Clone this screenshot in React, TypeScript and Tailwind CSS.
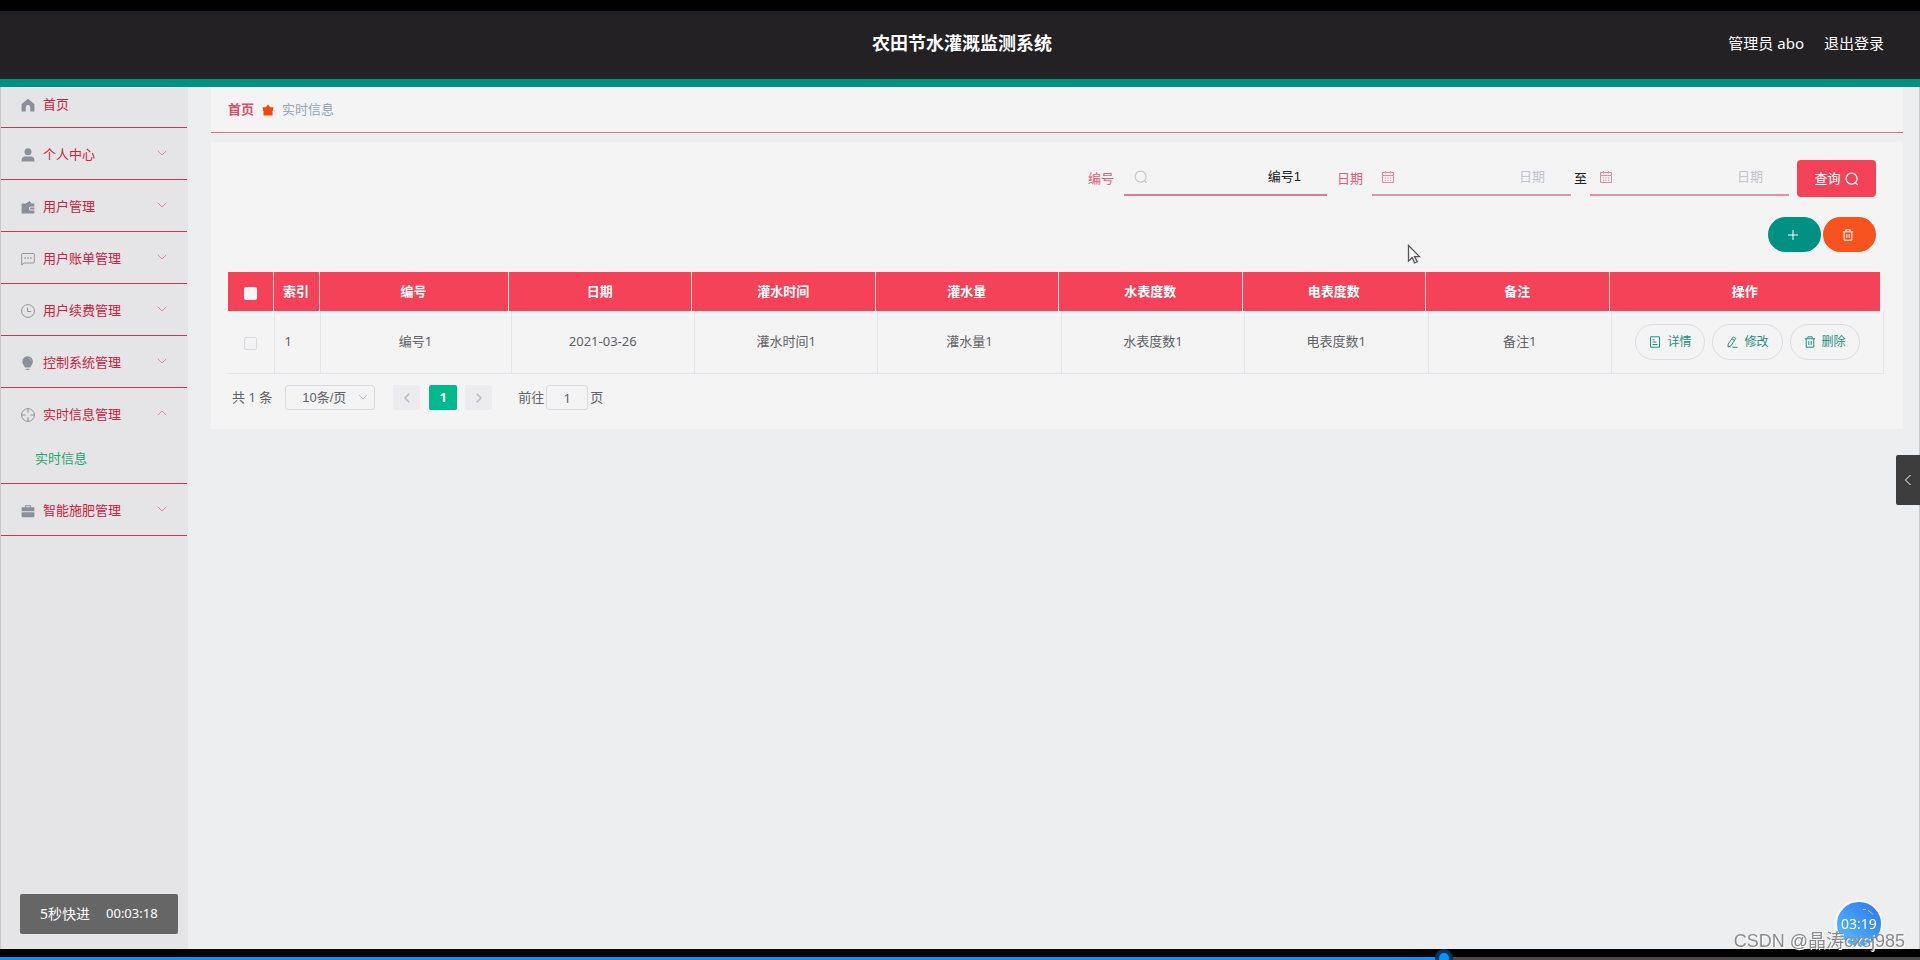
import { useState } from "react";
import type { ReactNode } from "react";

interface MenuItem {
  name: string;
  icon: ReactNode;
  children?: string[];
}

interface RecordRow {
  id: number;
  code: string;
  date: string;
  time: string;
  amount: string;
  water: string;
  electric: string;
  remark: string;
}

const ICON = "w-[14px] h-[14px] shrink-0";

const HomeIcon = () => (
  <svg viewBox="0 0 14 14" className={ICON} fill="#8d8f98">
    <path d="M7 .8 13.4 6v7.4H9.2V9.2a2.2 2.2 0 0 0-4.4 0v4.2H.6V6z" />
  </svg>
);

const UserIcon = () => (
  <svg viewBox="0 0 14 14" className={ICON} fill="#8d8f98">
    <circle cx="7" cy="3.8" r="3.5" />
    <path d="M.6 13.4v-1.6c0-1.900 1.500-3.200 3.200-3.200h6.400c1.700 0 3.200 1.300 3.200 3.200v1.600z" />
  </svg>
);

const WalletIcon = () => (
  <svg viewBox="0 0 14 14" className={ICON} fill="#8d8f98">
    <path d="M.6 3.600 5 3.600 8.600 1l2 2.600h2.800v3H9.800a1.900 1.900 0 0 0 0 3.900h3.600v2.900H.6z" />
    <path d="M10 7.600h3.400v1.900H10a.9.9 0 0 1 0-1.900z" />
  </svg>
);

const ChatIcon = () => (
  <svg viewBox="0 0 14 14" className={ICON} fill="none" stroke="#94969e">
    <path d="M1.500 1.500h11a.8.8 0 0 1 .8.8v7.900a.8.8 0 0 1-.8.8H3.200L.7 13V2.300a.8.8 0 0 1 .8-.8z" />
    <path d="M3.500 6h1.500M6.300 6h1.500M9.100 6h1.500" strokeWidth="1.400" />
  </svg>
);

const ClockIcon = () => (
  <svg viewBox="0 0 14 14" className={ICON} fill="none" stroke="#94969e">
    <circle cx="7" cy="7" r="6.400" />
    <path d="M6.500 3.500v4h3.700" />
  </svg>
);

const BulbIcon = () => (
  <svg viewBox="0 0 14 14" className={ICON} fill="#8d8f98">
    <path d="M6.600.2a5.300 5.300 0 0 1 5.300 5.300c0 2.600-1.700 3.600-2.700 6H4c-1-2.400-2.700-3.400-2.700-6A5.300 5.300 0 0 1 6.600.2z" />
    <path d="M4.800 12.800h3.600v1.100H4.800z" />
    <path d="M7.500 2.200c1.300.3 2.100 1.100 2.400 2.300" fill="none" stroke="#c9cacf" strokeWidth=".8" />
  </svg>
);

const AimIcon = () => (
  <svg viewBox="0 0 14 14" className={ICON} fill="none" stroke="#94969e">
    <circle cx="7" cy="7" r="6.400" />
    <path d="M7 .6v4M7 9.400v4M.6 7h4M9.400 7h4" strokeWidth="1.200" />
  </svg>
);

const CaseIcon = () => (
  <svg viewBox="0 0 14 14" className={ICON} fill="#8d8f98">
    <path d="M4 3.300V1.200h6v2.100h3.400v4H.6v-4zm1 0h4V2.200H5zM.6 8.300h12.800v5H.6z" />
  </svg>
);

const Chevron = ({ up, className }: { up?: boolean; className?: string }) => (
  <svg viewBox="0 0 10 6" className={`w-[10px] h-[6px] shrink-0 ${className ?? ""}`} fill="none" stroke="currentColor">
    <path d={up ? "M.8 5.200 5 1l4.200 4.200" : "M.8.8 5 5 9.200.8"} />
  </svg>
);

const SearchIcon = ({ className }: { className?: string }) => (
  <svg viewBox="0 0 14 14" className={`${ICON} ${className ?? ""}`} fill="none" stroke="currentColor" strokeWidth="1.200">
    <circle cx="6.600" cy="6.600" r="5.500" />
    <path d="m10.300 10.500 2.300 2.300" />
  </svg>
);

const CalendarIcon = () => (
  <svg viewBox="0 0 14 14" className={ICON} fill="none" stroke="#e58d9c">
    <path d="M1.500 2.500h11v10h-11zM1.500 5.500h11M4.500 1v2.500M9.500 1v2.500" />
    <path d="M3.800 8h1.200M6.400 8h1.200M9 8h1.200M3.800 10.300h1.200M6.400 10.300h1.200M9 10.300h1.200" />
  </svg>
);

const TrashIcon = () => (
  <svg viewBox="0 0 12 12" className="w-3 h-3 shrink-0" fill="none" stroke="currentColor">
    <path d="M.8 2.800h10.400M3.800 2.500v-1.700h4.400v1.700M2.200 2.800v8.400h7.600V2.800M4.800 5v4M7.200 5v4" />
  </svg>
);

const DocIcon = () => (
  <svg viewBox="0 0 12 12" className="w-3 h-3 shrink-0" fill="none" stroke="currentColor">
    <path d="M1.500.8h9v10.400h-9zM3.500 3.800h2M3.500 6h4M3.500 8.500h5" />
  </svg>
);

const EditIcon = () => (
  <svg viewBox="0 0 12 12" className="w-3 h-3 shrink-0" fill="none" stroke="currentColor">
    <path d="M7.300.9 9.800 2.500 4.900 9.800 2 11l.2-3zM6 2.900l2.500 1.600M6.500 11.300h5" />
  </svg>
);

const menu: MenuItem[] = [
  { name: "个人中心", icon: <UserIcon /> },
  { name: "用户管理", icon: <WalletIcon /> },
  { name: "用户账单管理", icon: <ChatIcon /> },
  { name: "用户续费管理", icon: <ClockIcon /> },
  { name: "控制系统管理", icon: <BulbIcon /> },
  { name: "实时信息管理", icon: <AimIcon />, children: ["实时信息"] },
  { name: "智能施肥管理", icon: <CaseIcon /> },
];

const rows: RecordRow[] = [
  {
    id: 1,
    code: "编号1",
    date: "2021-03-26",
    time: "灌水时间1",
    amount: "灌水量1",
    water: "水表度数1",
    electric: "电表度数1",
    remark: "备注1",
  },
];

const Header = () => (
  <header className="grid grid-cols-[1fr_auto_1fr] items-center h-[76px] px-9 pb-1 bg-[#232124] border-b-8 border-[#009182] text-white">
    <h1 className="col-start-2 pl-1 text-lg font-bold">农田节水灌溉监测系统</h1>
    <div className="flex justify-end gap-5 text-[15px]">
      <span>管理员 abo</span>
      <button>退出登录</button>
    </div>
  </header>
);

const Sidebar = () => {
  const [open, setOpen] = useState("实时信息管理");

  return (
    <aside className="w-[188px] shrink-0 bg-[#e5e4e6] border-l border-[#c8c8ca] pr-px">
      <ul className="text-[#cb2340]">
        <li className="h-[41px] border-b border-[#c63a50]">
          <a href="#home" className="flex items-center gap-2 pl-5 pt-1 h-8">
            <HomeIcon />
            首页
          </a>
        </li>
        {menu.map((item) => (
          <li key={item.name} className="border-b border-[#c63a50]">
            <button
              onClick={() => setOpen(open === item.name ? "" : item.name)}
              className="flex items-center w-full h-[51px] pt-[2px] pl-5 pr-5"
            >
              {item.icon}
              <span className="ml-2">{item.name}</span>
              <Chevron up={open === item.name} className="ml-auto mb-1 text-[#e58d9c]" />
            </button>
            {open === item.name &&
              item.children?.map((child) => (
                <a key={child} href="#info" className="flex items-center h-11 pl-[34px] pb-1 text-[#1fa673]">
                  {child}
                </a>
              ))}
          </li>
        ))}
      </ul>
    </aside>
  );
};

const DateInput = ({ label }: { label: string }) => (
  <span className="flex items-center w-[199px] h-9 pl-[9px] pr-[26px] border-b-2 border-[#e294a4]">
    <CalendarIcon />
    <input
      aria-label={label}
      placeholder="日期"
      className="flex-1 min-w-0 text-right outline-none placeholder:text-[#c0c4cc]"
    />
  </span>
);

const SearchForm = () => {
  const [code, setCode] = useState("编号1");

  return (
    <form className="flex justify-end pr-2 text-[#d9607a]" onSubmit={(e) => e.preventDefault()}>
      <label htmlFor="code" className="leading-9 mr-[10px]">编号</label>
      <span className="flex items-center w-[203px] h-9 pl-[10px] pr-[26px] mr-[10px] border-b-2 border-[#e07c90]">
        <SearchIcon className="text-[#c6c8ce]" />
        <input
          id="code"
          value={code}
          onChange={(e) => setCode(e.target.value)}
          className="flex-1 min-w-0 text-right text-[#222] outline-none font-['Liberation_Sans','Noto_Sans_CJK_SC',sans-serif]"
        />
      </span>
      <span className="leading-9 mr-[9px]">日期</span>
      <DateInput label="开始日期" />
      <span className="leading-9 mx-[3px] text-[#222]">至</span>
      <DateInput label="结束日期" />
      <button className="flex items-center justify-center gap-1 w-[79px] h-[37px] ml-2 rounded bg-[#f44258] text-white">
        查询
        <SearchIcon />
      </button>
    </form>
  );
};

const TH = "border-r border-[#f3dfe3] font-bold text-center";
const TD = "border-r border-[#e4e4ec] text-center";
const ACTION = "flex items-center gap-[6px] h-9 px-[13px] border border-[#dcdce6] rounded-full text-[#26907f]";

const DataTable = () => (
  <table className="block mt-5">
    {/* head is a little narrower than the body */}
    <thead className="table table-fixed w-[calc(100%-4px)] bg-[#f44258] text-white">
      <tr className="h-[39px]">
        <th className={`w-[45px] ${TH}`}>
          <input
            type="checkbox"
            aria-label="全选"
            className="appearance-none block mx-auto mt-[3px] w-[13px] h-[13px] rounded-xs bg-[#f6f6f6]"
          />
        </th>
        <th className={`w-[46px] ${TH}`}>索引</th>
        <th className={`w-[189px] ${TH}`}>编号</th>
        <th className={TH}>日期</th>
        <th className={TH}>灌水时间</th>
        <th className={TH}>灌水量</th>
        <th className={TH}>水表度数</th>
        <th className={TH}>电表度数</th>
        <th className={TH}>备注</th>
        <th className="w-[271px] font-bold">操作</th>
      </tr>
    </thead>
    <tbody className="table table-fixed w-full text-[#606266]">
      {rows.map((row, index) => (
        <tr key={row.id} className="h-[62px] border-b border-[#e4e4ec]">
          <td className={`w-[46px] ${TD}`}>
            <input
              type="checkbox"
              aria-label={`选择${row.code}`}
              className="appearance-none block mx-auto mt-[3px] w-[13px] h-[13px] rounded-xs border border-[#d8dae2]"
            />
          </td>
          <td className="w-[46px] border-r border-[#e4e4ec] pl-[10px]">{index + 1}</td>
          <td className={`w-[191px] ${TD}`}>{row.code}</td>
          <td className={TD}>{row.date}</td>
          <td className={TD}>{row.time}</td>
          <td className={TD}>{row.amount}</td>
          <td className={TD}>{row.water}</td>
          <td className={TD}>{row.electric}</td>
          <td className={TD}>{row.remark}</td>
          <td className={`w-[272px] ${TD}`}>
            <div className="flex justify-center gap-[7px] text-xs">
              <button className={ACTION}><DocIcon />详情</button>
              <button className={ACTION}><EditIcon />修改</button>
              <button className={ACTION}><TrashIcon />删除</button>
            </div>
          </td>
        </tr>
      ))}
    </tbody>
  </table>
);

const Pagination = () => (
  <div className="flex items-center h-[26px] mt-[11px] pl-1 text-[#606266] text-[13px]">
    <span>共 1 条</span>
    <div className="relative ml-[13px]">
      <select
        aria-label="每页条数"
        className="appearance-none w-[90px] h-[25px] pl-4 border border-[#d8dae2] rounded-[3px] font-['Liberation_Sans','Noto_Sans_CJK_SC',sans-serif]"
      >
        <option>10条/页</option>
      </select>
      <Chevron className="absolute right-[7px] top-[9px] text-[#c0c4cc] pointer-events-none" />
    </div>
    <button aria-label="上一页" className="flex items-center justify-center w-[27px] h-[25px] ml-[18px] rounded-xs bg-[#ececee] text-[#b8bac0]">
      <Chevron className="rotate-90 stroke-[1.5]" />
    </button>
    <button className="w-7 h-[25px] ml-[9px] rounded-xs bg-[#00b98d] text-white font-bold">1</button>
    <button aria-label="下一页" className="flex items-center justify-center w-[27px] h-[25px] ml-2 rounded-xs bg-[#ececee] text-[#b8bac0]">
      <Chevron className="-rotate-90 stroke-[1.5]" />
    </button>
    <label htmlFor="page" className="ml-[26px]">前往</label>
    <input
      id="page"
      defaultValue="1"
      className="w-[42px] h-[25px] mx-[2px] border border-[#d8dae2] rounded-[3px] text-center"
    />
    <span>页</span>
  </div>
);

export default function App() {
  return (
    <div className="flex flex-col min-h-screen bg-black pt-[11px] text-[13px] font-['Noto_Sans','Noto_Sans_CJK_SC',sans-serif]">
      <Header />
      <div className="flex flex-1 bg-[#edeef0] border-r border-[#c8c8ca]">
        <Sidebar />
        <main className="flex-1 min-w-0 pl-[23px] pr-4">
          <nav className="flex items-center gap-2 h-[46px] px-[17px] bg-[#f4f4f4] border-b border-[#d97583]">
            <a href="#home" className="font-bold text-[#d8506a]">首页</a>
            <svg viewBox="0 0 12 12" className="w-3 h-3" fill="#f4480e">
              <path d="M1.500 6.500h9V11.500h-9zM.6 3.200h3.200L6 .6l2.200 2.600h3.200L10.800 7H1.200z" />
            </svg>
            <span className="text-[#97a4b5]">实时信息</span>
          </nav>
          <section className="mt-[9px] pl-[17px] pt-[18px] pb-[18px] pr-[19px] bg-[#f4f4f4]">
            <SearchForm />
            <div className="flex justify-end gap-[2px] mt-5 pr-2">
              <button aria-label="新增" className="flex items-center justify-center w-[53px] h-[35px] rounded-full bg-[#009182] text-white">
                <svg viewBox="0 0 12 12" className="w-3 h-3 mr-1" stroke="currentColor">
                  <path d="M6 1v10M1 6h10" />
                </svg>
              </button>
              <button aria-label="删除" className="flex items-center justify-center w-[53px] h-[35px] pr-1 rounded-full bg-[#f6531f] text-white">
                <TrashIcon />
              </button>
            </div>
            <DataTable />
            <Pagination />
          </section>
        </main>
      </div>

      {/* player progress */}
      <footer className="relative h-[11px] pt-2 bg-black">
        <div className="h-[3px] bg-[#4a4a4a]">
          <div className="h-full w-3/4 bg-[#0793fb]" />
        </div>
        <div className="absolute left-3/4 bottom-0 -ml-[5px] w-[18px] h-[11px] overflow-hidden">
          <div className="w-[18px] h-[18px] rounded-full bg-[#06345a] p-1">
            <div className="w-full h-full rounded-full bg-[#0793fb]" />
          </div>
        </div>
      </footer>

      <div className="fixed left-5 bottom-[26px] flex items-center gap-4 h-10 px-5 rounded-xs bg-[#666] text-white">
        <span className="text-sm">5秒快进</span>
        <span>00:03:18</span>
      </div>

      <button aria-label="展开" className="fixed right-0 top-[455px] flex items-center justify-center w-6 h-[50px] rounded-l-xs bg-[#3c3c3c] text-white">
        <svg viewBox="0 0 8 12" className="w-2 h-3" fill="none" stroke="currentColor">
          <path d="M6.500 1 1.500 6l5 5" />
        </svg>
      </button>

      <div className="fixed right-[37px] bottom-3 flex items-center justify-center w-12 h-12 rounded-full border-2 border-[#f6f8fc] bg-linear-to-tr from-[#5cc0fc] to-[#2f72ee] text-white text-sm">
        03:19
        <svg viewBox="0 0 12 8" className="absolute right-[7px] top-[6px] w-3 h-2" fill="none" stroke="#a9cdfb">
          <path d="M1 1.500h3M6 2.500q3 1.500 5 4" />
        </svg>
      </div>
      <div className="fixed right-[15px] bottom-[7px] text-lg leading-6 text-[#8b8b8d] [text-shadow:1px_1px_0_#fff] font-['Liberation_Sans','Noto_Sans_CJK_SC',sans-serif]">
        CSDN @晶涛cxsj985
      </div>

      <svg viewBox="0 0 14 20" className="fixed left-[1407px] top-[244px] w-[14px] h-5" fill="#f8f8f8" stroke="#55555a" strokeWidth="1.300">
        <path d="M1.500 1.500v15.500l3.600-3.400 2.600 5.400 2.500-1.200-2.600-5.200h4.900z" />
      </svg>
    </div>
  );
}
